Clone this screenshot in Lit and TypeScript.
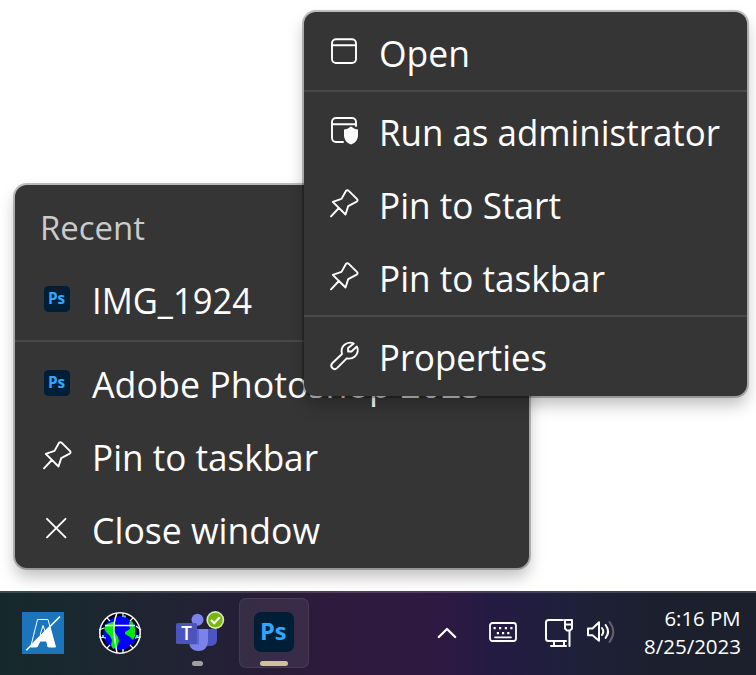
import { LitElement, html, css, svg } from "lit";
import { customElement, property } from "lit/decorators.js";

interface Entry {
  label: string;
  width: number;
  icon?: string;
  heading?: boolean;
  divider?: boolean;
}

const LAUNCH: Entry[] = [
  { label: "Open", width: 91, icon: "window", divider: true },
  { label: "Run as administrator", width: 341, icon: "shield" },
  { label: "Pin to Start", width: 182, icon: "pin" },
  { label: "Pin to taskbar", width: 226, icon: "pin", divider: true },
  { label: "Properties", width: 168, icon: "wrench" },
];

const RECENT: Entry[] = [
  { label: "Recent", width: 105, heading: true },
  { label: "IMG_1924", width: 160, icon: "ps", divider: true },
  { label: "Adobe Photoshop 2023", width: 390, icon: "ps" },
  { label: "Pin to taskbar", width: 226, icon: "pin" },
  { label: "Close window", width: 228, icon: "close" },
];

const glyphs: Record<string, unknown> = {
  window: svg`<rect x="2" y="2.2" width="24" height="23.8" rx="4"/><path d="M2 8.2h24"/>`,
  shield: svg`<path d="M13 26H6a4 4 0 0 1-4-4V6a4 4 0 0 1 4-4h16a4 4 0 0 1 4 4v4M2 8.2h24"/>
    <path class="solid" d="M21 10.600q3 2.600 7 2.800v6q0 6.200-7 9.200q-7-3-7-9.200v-6q4-.2 7-2.800z"/>`,
  pin: svg`<path d="M16.200 1.500q1.400-.8 2.600.4l8.300 8.300q1.100 1.300-.4 2.400l-8.500 4.500-2.700 8.400L2.800 12.800l8.700-2.900zM8.900 19 1 27.300"/>`,
  wrench: svg`<path d="M23.800 2.500c-5.600-2.600-12.200 1.500-12.200 7.600q0 1.500.4 2.900L2.200 22.300a3.400 3.400 0 0 0 4.800 4.800l9.700-9.800c6.100 1.600 12-3.400 10.900-9.600q-.2-1.300-.8-2.200l-5.300 5h-3.400V7.100z"/>`,
  close: svg`<path d="m4 4.800 18.500 18.500M22.500 4.800 4 23.300"/>`,
};

@customElement("ps-badge")
export class PsBadge extends LitElement {
  @property({ type: Number }) size = 26;

  static styles = css`
    :host { display: block; }
    svg { display: block; }
    text { font: 700 23.500px "Open Sans", sans-serif; fill: #31a8ff; }
  `;

  render() {
    return html`<svg width=${this.size} height=${this.size} viewBox="0 0 40 40">
      <rect width="40" height="40" rx="7" fill="#001e36"/>
      <text x="6" y="28" textLength="26.500" lengthAdjust="spacingAndGlyphs">Ps</text>
    </svg>`;
  }
}

@customElement("jump-menu")
export class JumpMenu extends LitElement {
  @property({ attribute: false }) entries: Entry[] = [];

  static styles = css`
    :host {
      display: block;
      box-sizing: border-box;
      background: #353535;
      border-radius: 12px;
      box-shadow: 0 0 0 2px rgba(0, 0, 0, 0.25), 0 9px 16px rgba(0, 0, 0, 0.25);
    }
    .row { display: flex; align-items: center; height: 73px; padding-left: var(--inset, 26px); }
    .row.title { padding-left: 25px; }
    .icon { flex: none; width: 28px; margin: 0 var(--gap, 21px) 5px 0; }
    .icon svg { display: block; overflow: visible; }
    .badge { box-sizing: border-box; padding-left: 1px; margin-bottom: 3px; }
    .icon .line { fill: none; stroke: #fff; stroke-width: 1.9; stroke-linejoin: round; stroke-linecap: round; }
    .solid { fill: #fff; stroke: none; }
    .label { display: block; height: 73px; overflow: visible; }
    .label text { font-family: "Open Sans", "Noto Sans", sans-serif; font-size: 36.500px; fill: #fff; }
    .label .heading { font-size: 33.500px; fill: #cbcbcb; }
    .divider { height: 2px; background: #494949; margin: var(--before, 0) 0 var(--after, 4px); }
  `;

  render() {
    return this.entries.map(
      (e) => html`<div class=${e.heading ? "row title" : "row"}>
          ${e.icon
            ? html`<div class=${e.icon === "ps" ? "icon badge" : "icon"}>
                ${e.icon === "ps"
                  ? html`<ps-badge .size=${26}></ps-badge>`
                  : html`<svg class="line" width="28" height="28" viewBox="0 0 28 28">${glyphs[e.icon]}</svg>`}
              </div>`
            : ""}
          <svg class="label" width=${e.width} height="73">
            <text class=${e.heading ? "heading" : ""} x="0" y=${e.heading ? 49 : 50.3}
              textLength=${e.width} lengthAdjust="spacingAndGlyphs">${e.label}</text>
          </svg>
        </div>
        ${e.divider ? html`<div class="divider"></div>` : ""}`
    );
  }
}

@customElement("task-bar")
export class TaskBar extends LitElement {
  static styles = css`
    :host {
      display: flex;
      align-items: flex-start;
      box-sizing: border-box;
      height: 84px;
      padding-left: 22px;
      border-top: 2px solid rgba(255, 255, 255, 0.16);
      background: linear-gradient(90deg, #15292c 0, #1b2730 90px, #212333 180px, #261d37 250px,
        #2e1a3c 330px, #2e1942 440px, #241b42 490px, #1f203b 570px, #1c202e 650px, #1c202d 756px);
      background-origin: border-box;
    }
    svg { display: block; overflow: visible; flex: none; }
    .app { margin: 19px 35px 0 0; }
    .teams { display: flex; flex-direction: column; align-items: center; width: 48px; margin-top: 18px; }
    .dot { width: 11px; height: 5px; margin-top: 8px; margin-right: 5px; border-radius: 3px; background: #a0a0a2; }
    .active {
      display: flex; flex-direction: column; align-items: center;
      box-sizing: border-box; width: 70px; height: 70px; margin: 5px 129px 0 15px; padding-top: 13px;
      border: 1px solid rgba(255, 255, 255, 0.07); border-radius: 7px;
      background: rgba(255, 255, 255, 0.075);
    }
    .bar { width: 28px; height: 5px; margin-top: 9px; border-radius: 3px; background: #d0c09b; }
    .tray { fill: none; stroke: #fff; stroke-width: 2; stroke-linecap: round; stroke-linejoin: round; }
    .tray .fill { fill: #fff; stroke: none; }
    .faint { stroke: #62616f; }
    .up { margin: 35px 33px 0 0; stroke-width: 2.3; }
    .keys { margin: 29px 28px 0 0; }
    .net { margin: 26px 14px 0 0; }
    .sound { margin: 28px 29px 0 0; }
    .clock text { font: 20.500px "Open Sans", "Noto Sans", sans-serif; fill: #fff; }
    .letter { font: 600 19px "Open Sans", sans-serif; fill: #fff; }
  `;

  render() {
    return html`
      <svg class="app" width="42" height="42" viewBox="0 0 42 42">
        <clipPath id="lower"><path d="M42 .5V42H.5z"/></clipPath>
        <rect width="42" height="42" fill="#1b75bc"/>
        <path d="M15.500 7.500H26L33.500 35h-7l-1.500-6h-7.500l-3 6H8.700zM21 13.500l3.200 9h-6z"
          fill="none" stroke="#fff" stroke-width="1"/>
        <path d="M15.500 7.500H26L33.500 35h-8l-1.200-6h-5.800l-3 6H8.700z" fill="#fff" clip-path="url(#lower)"/>
        <path d="M4.300 38.200 38 4.500" stroke="#fff" stroke-width="1.600"/>
      </svg>
      <svg class="app" width="42" height="42" viewBox="0 0 42 42">
        <circle cx="21" cy="21" r="20.200" fill="#000" stroke="#f4f4f4" stroke-width="1.600"/>
        <circle cx="21" cy="21" r="16.800" fill="#0000fb"/>
        <path d="M8 12l5-2h3v5l-1 4 2 3 2 3 1 4-2 6-4 2-2-4 1-5-2-4-4-4-2-4z" fill="#00f000"/>
        <path d="M30 10l3-1 3 7v8l-2 4-3-3-5-3v-2l5-3z" fill="#00e800"/>
        <path d="M18 1q-4 10-3 20t3 20M6 13.500h30" fill="none" stroke="#fff" stroke-width="1.500"/>
        <path d="M0 18l5-2M0 25l7 1M42 18l-5-4M42 25l-6 1M24 1v4M24 41v-4M8 6l3 3M34 6l-3 3M8 36l3-3M34 36l-3-3"
          fill="none" stroke="#fff" stroke-width="1.200"/>
        <path d="M26 3.500v2M37 24h2.500M24 37v2M3 24h2" stroke="#38dcff" stroke-width="1.800"/>
      </svg>
      <div class="teams">
        <svg width="48" height="42" viewBox="0 0 48 42">
          <path d="M29 18h12v10.500q0 6.500-6.500 6.500H29z" fill="#4c55c2"/>
          <circle cx="21.500" cy="8.800" r="6" fill="#7b83eb"/>
          <path d="M13 18h19v12.500q-1 9.500-9.500 9.500Q14.500 40 13 32z" fill="#7b83eb"/>
          <path d="M13 18h10v15.500H13z" fill="#4a51b5" opacity=".55"/>
          <rect y="12" width="21" height="21" rx="1.500" fill="#4b53bc"/>
          <text class="letter" x="5.200" y="28.800" textLength="10.500" lengthAdjust="spacingAndGlyphs">T</text>
          <circle cx="39.300" cy="9" r="8.900" fill="#d9e8c5"/>
          <circle cx="39.300" cy="9" r="7.300" fill="#76b80d"/>
          <path d="m35 9 3.200 3.200 5.600-6" fill="none" stroke="#fff" stroke-width="2.200"/>
        </svg>
        <div class="dot"></div>
      </div>
      <div class="active"><ps-badge .size=${40}></ps-badge><div class="bar"></div></div>
      <svg class="tray up" width="18" height="10" viewBox="0 0 18 10"><path d="m.8 9 8.200-8 8.200 8"/></svg>
      <svg class="tray keys" width="28" height="20" viewBox="0 0 28 20">
        <rect x="1" y="1" width="26" height="18" rx="2.500" stroke-width="1.800"/>
        <path d="M6 15.300h16" stroke-width="1.800"/>
        <path class="fill" d="M4.500 5h2.200v2.200H4.500zM10 5h2.200v2.200H10zM15.800 5H18v2.200h-2.200zM21.300 5h2.200v2.200h-2.200zM7.800 10H10v2.200H7.800zM13 10h2.200v2.200H13zM18.200 10h2.200v2.200h-2.200z"/>
      </svg>
      <svg class="tray net" width="28" height="28" viewBox="0 0 28 28">
        <path d="M18 1H3.500Q1 1 1 3.500v16Q1 22 3.500 22H21M9 22v5M19 22v5M6 27h15"/>
        <path d="M20 1h7v8.500l-2 2h-3l-2-2zM20 5.500h7M24.500 12v15"/>
      </svg>
      <svg class="tray sound" width="28" height="24" viewBox="0 0 28 24">
        <path d="M1 7.500h4.500L12 1.300v18.400l-6.500-5.500H1z"/>
        <path d="M15 7q2.500 3.500 0 7M18.600 4q5 6.500 0 13"/>
        <path class="faint" d="M22.500 1q7.500 9.500 0 20"/>
      </svg>
      <svg class="clock" width="97" height="80" viewBox="0 0 97 80">
        <text x="20.500" y="33" textLength="76" lengthAdjust="spacingAndGlyphs">6:16 PM</text>
        <text x="0" y="61" textLength="97" lengthAdjust="spacingAndGlyphs">8/25/2023</text>
      </svg>
    `;
  }
}

@customElement("app-root")
export class AppRoot extends LitElement {
  static styles = css`
    :host {
      position: relative;
      display: flex;
      flex-direction: column;
      justify-content: flex-end;
      height: 675px;
      overflow: hidden;
      background: #fff;
    }
    .recent {
      --inset: 28px;
      --gap: 21px;
      --before: 3px;
      --after: 6px;
      width: 514px;
      height: 383px;
      margin: 0 0 23px 15px;
      padding-top: 6px;
    }
    .launch { position: absolute; left: 304px; top: 12px; width: 443px; height: 384px; padding-top: 5px; }
    task-bar { position: relative; flex: none; }
  `;

  render() {
    return html`
      <jump-menu class="recent" .entries=${RECENT}></jump-menu>
      <jump-menu class="launch" .entries=${LAUNCH}></jump-menu>
      <task-bar></task-bar>
    `;
  }
}
